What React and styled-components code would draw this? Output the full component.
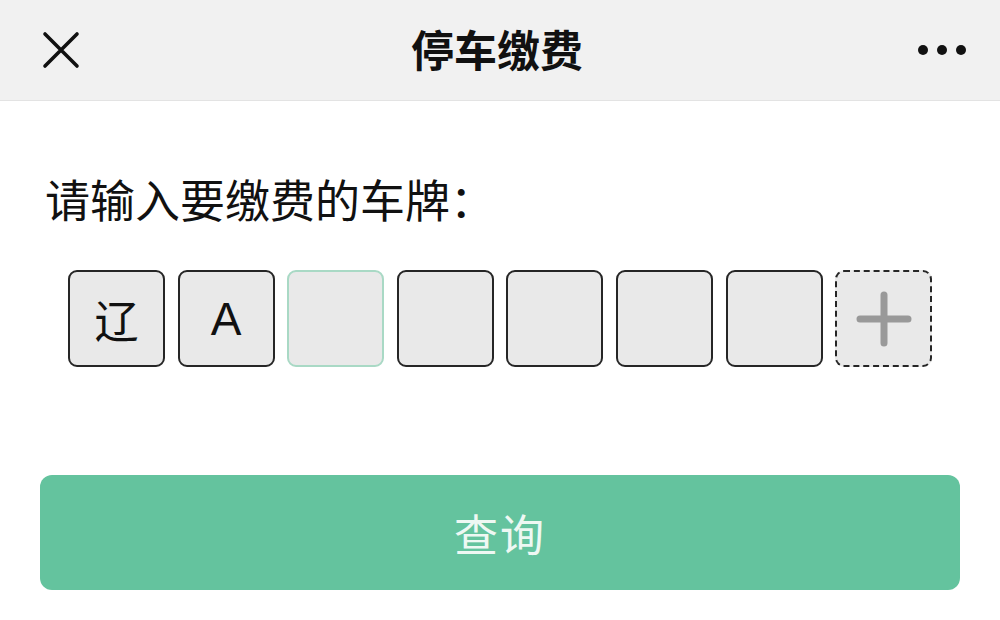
import React from 'react';
import styled, { createGlobalStyle } from 'styled-components';

const GlobalStyle = createGlobalStyle`
  html, body {
    margin: 0;
    padding: 0;
    background: #ffffff;
  }
  body {
    font-family: "Noto Sans CJK SC", "Noto Sans", sans-serif;
    color: #111;
  }
`;

const Page = styled.div`
  width: 1000px;
  height: 620px;
  overflow: hidden;
  background: #ffffff;
  display: flex;
  flex-direction: column;
`;

const NavBar = styled.header`
  height: 100px;
  flex-shrink: 0;
  background: #f1f1f1;
  border-bottom: 1px solid #e3e3e3;
  display: grid;
  grid-template-columns: 120px 1fr 120px;
  align-items: center;
`;

const NavButton = styled.div`
  display: flex;
  align-items: center;
  justify-content: ${(p) => (p.$right ? 'flex-end' : 'flex-start')};
  padding: ${(p) => (p.$right ? '0 34px 0 0' : '0 0 0 42px')};
`;

const Title = styled.h1`
  margin: 0;
  text-align: center;
  font-size: 43px;
  font-weight: 700;
  line-height: 1;
  color: #111;
  padding: 0 6px 4px 0;
`;

const Dots = styled.div`
  display: flex;
  gap: 9px;
`;

const Dot = styled.span`
  width: 10px;
  height: 10px;
  border-radius: 50%;
  background: #111;
`;

const Body = styled.main`
  display: flex;
  flex-direction: column;
  padding: 68px 40px 0 40px;
`;

const Label = styled.div`
  font-size: 45px;
  line-height: 60px;
  padding-left: 5px;
  color: #111;
`;

const PlateRow = styled.div`
  display: flex;
  gap: 12.6px;
  margin: 41px 0 0 28px;
`;

const Cell = styled.div`
  width: 97px;
  height: 97px;
  box-sizing: border-box;
  border-radius: 9px;
  background: #e9e9e9;
  border: 2.5px ${(p) => (p.$dashed ? 'dashed' : 'solid')}
    ${(p) => (p.$active ? '#a9d9c5' : '#262626')};
  display: flex;
  align-items: center;
  justify-content: center;
  font-size: ${(p) => (p.$latin ? '46px' : '44px')};
  color: #111;
  font-family: ${(p) =>
    p.$latin ? '"Liberation Sans", Arial, sans-serif' : '"Noto Sans CJK SC", sans-serif'};
`;

const QueryButton = styled.button`
  margin-top: 108px;
  height: 115px;
  width: 100%;
  border: none;
  border-radius: 12px;
  background: #64c39e;
  color: #eef8f3;
  font-family: "Noto Sans CJK SC", sans-serif;
  font-size: 44px;
  letter-spacing: 2px;
  display: flex;
  align-items: center;
  justify-content: center;
  padding: 0;
`;

const CloseIcon = () => (
  <svg width="38" height="38" viewBox="0 0 38 38">
    <path d="M3 3 L35 35 M35 3 L3 35" stroke="#111" strokeWidth="3.6" strokeLinecap="round" />
  </svg>
);

const PlusIcon = () => (
  <svg width="56" height="56" viewBox="0 0 56 56">
    <path d="M28 4 V52 M4 28 H52" stroke="#999" strokeWidth="7" strokeLinecap="round" />
  </svg>
);

const plate = [
  { value: '辽' },
  { value: 'A', latin: true },
  { value: '', active: true },
  { value: '' },
  { value: '' },
  { value: '' },
  { value: '' },
];

export default function App() {
  return (
    <Page>
      <GlobalStyle />
      <NavBar>
        <NavButton>
          <CloseIcon />
        </NavButton>
        <Title>停车缴费</Title>
        <NavButton $right>
          <Dots>
            <Dot />
            <Dot />
            <Dot />
          </Dots>
        </NavButton>
      </NavBar>
      <Body>
        <Label>请输入要缴费的车牌：</Label>
        <PlateRow>
          {plate.map((cell, i) => (
            <Cell key={i} $active={cell.active} $latin={cell.latin}>
              {cell.value}
            </Cell>
          ))}
          <Cell $dashed>
            <PlusIcon />
          </Cell>
        </PlateRow>
        <QueryButton>查询</QueryButton>
      </Body>
    </Page>
  );
}
